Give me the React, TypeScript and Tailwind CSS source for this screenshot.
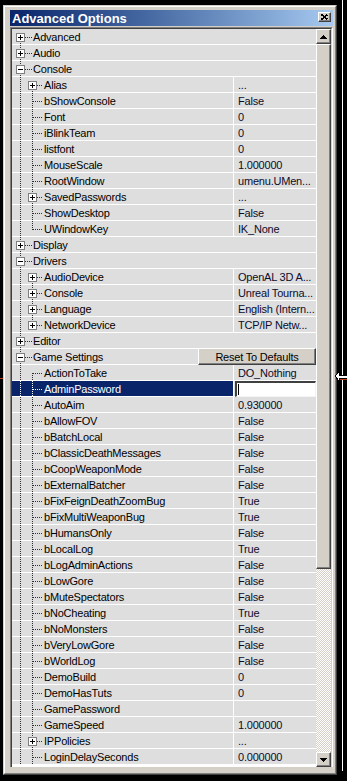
import React from "react";

type Row = {
  label: string;
  value?: string;
  level: 0 | 1;
  box?: "+" | "-";
  top?: boolean;
  first?: boolean;
  last?: boolean;
  button?: boolean;
  selected?: boolean;
};

const rows: Row[] = [
  { label: "Advanced", level: 0, box: "+", top: true },
  { label: "Audio", level: 0, box: "+" },
  { label: "Console", level: 0, box: "-" },
  { label: "Alias", value: "...", level: 1, box: "+", first: true },
  { label: "bShowConsole", value: "False", level: 1 },
  { label: "Font", value: "0", level: 1 },
  { label: "iBlinkTeam", value: "0", level: 1 },
  { label: "listfont", value: "0", level: 1 },
  { label: "MouseScale", value: "1.000000", level: 1 },
  { label: "RootWindow", value: "umenu.UMen...", level: 1 },
  { label: "SavedPasswords", value: "...", level: 1, box: "+" },
  { label: "ShowDesktop", value: "False", level: 1 },
  { label: "UWindowKey", value: "IK_None", level: 1, last: true },
  { label: "Display", level: 0, box: "+" },
  { label: "Drivers", level: 0, box: "-" },
  { label: "AudioDevice", value: "OpenAL 3D A...", level: 1, box: "+", first: true },
  { label: "Console", value: "Unreal Tourna...", level: 1, box: "+" },
  { label: "Language", value: "English (Intern...", level: 1, box: "+" },
  { label: "NetworkDevice", value: "TCP/IP Netw...", level: 1, box: "+", last: true },
  { label: "Editor", level: 0, box: "+" },
  { label: "Game Settings", level: 0, box: "-", button: true },
  { label: "ActionToTake", value: "DO_Nothing", level: 1, first: true },
  { label: "AdminPassword", value: "", level: 1, selected: true },
  { label: "AutoAim", value: "0.930000", level: 1 },
  { label: "bAllowFOV", value: "False", level: 1 },
  { label: "bBatchLocal", value: "False", level: 1 },
  { label: "bClassicDeathMessages", value: "False", level: 1 },
  { label: "bCoopWeaponMode", value: "False", level: 1 },
  { label: "bExternalBatcher", value: "False", level: 1 },
  { label: "bFixFeignDeathZoomBug", value: "True", level: 1 },
  { label: "bFixMultiWeaponBug", value: "True", level: 1 },
  { label: "bHumansOnly", value: "False", level: 1 },
  { label: "bLocalLog", value: "True", level: 1 },
  { label: "bLogAdminActions", value: "False", level: 1 },
  { label: "bLowGore", value: "False", level: 1 },
  { label: "bMuteSpectators", value: "False", level: 1 },
  { label: "bNoCheating", value: "True", level: 1 },
  { label: "bNoMonsters", value: "False", level: 1 },
  { label: "bVeryLowGore", value: "False", level: 1 },
  { label: "bWorldLog", value: "False", level: 1 },
  { label: "DemoBuild", value: "0", level: 1 },
  { label: "DemoHasTuts", value: "0", level: 1 },
  { label: "GamePassword", value: "", level: 1 },
  { label: "GameSpeed", value: "1.000000", level: 1 },
  { label: "IPPolicies", value: "...", level: 1, box: "+" },
  { label: "LoginDelaySeconds", value: "0.000000", level: 1 },
];

const raised =
  "border border-t-white border-l-white border-r-[#404040] border-b-[#404040] shadow-[inset_-1px_-1px_#808080] bg-[#d4d0c8]";

// expand / collapse box, 9px square
function ExpandBox({ x, sign }: { x: number; sign: "+" | "-" }) {
  return (
    <g>
      <rect x={x + 0.5} y={4.5} width={8} height={8} fill="#ffffff" stroke="#808080" />
      <path d={`M${x + 2} 8.5H${x + 7}`} stroke="#000000" />
      {sign === "+" && <path d={`M${x + 4.5} 6V11`} stroke="#000000" />}
    </g>
  );
}

// dotted tree connectors drawn at the left of each row
function Gutter({ row }: { row: Row }) {
  const c = row.selected ? "#ffffff" : "#303030";
  const w = row.level === 0 ? 21 : 32;
  return (
    <svg width={w} height={15} className="shrink-0" shapeRendering="crispEdges">
      <g stroke={c} strokeDasharray="1 1" fill="none">
        <path d={`M8.5 ${row.top ? 12 : 0}V15`} />
        {row.level === 0 && <path d="M13 8.5H20" />}
        {row.level === 1 && (
          <>
            <path d={`M20.5 ${row.first ? 8 : 0}V${row.last ? 9 : 15}`} />
            <path d={`M${row.box ? 25 : 21} 8.5H31`} />
          </>
        )}
      </g>
      {row.box && <ExpandBox x={row.level === 0 ? 4 : 16} sign={row.box} />}
    </svg>
  );
}

function TreeRow({ row }: { row: Row }) {
  if (row.level === 0) {
    return (
      <div className="flex h-[16px] border-b border-white">
        <div className="flex flex-1 items-center">
          <Gutter row={row} />
          <span className="pt-px">{row.label}</span>
        </div>
        {row.button && (
          <div
            className={`${raised} -mt-px flex h-[17px] w-[118px] items-center justify-center pt-px text-black`}
          >
            Reset To Defaults
          </div>
        )}
      </div>
    );
  }
  return (
    <div className="flex h-[16px] border-b border-white">
      <div
        className={`flex w-[221px] items-center ${row.selected ? "bg-[#0a246a] text-white" : ""}`}
      >
        <Gutter row={row} />
        <span className="pt-px">{row.label}</span>
      </div>
      <div className="w-px bg-white" />
      {row.selected ? (
        <div className="flex-1 pl-px">
          <div className="h-[16px] w-[81px] border-t-2 border-l-2 border-r border-b border-t-[#404040] border-l-[#404040] border-r-[#f4f4f4] border-b-[#f4f4f4] bg-white pl-[1px] pt-[1px]">
            <div className="h-[11px] w-px bg-black" />
          </div>
        </div>
      ) : (
        <div className="flex min-w-0 flex-1 items-center overflow-hidden whitespace-nowrap pl-[4px] pt-px text-[#0c0c2c]">
          {row.value}
        </div>
      )}
    </div>
  );
}

function Arrow({ up }: { up?: boolean }) {
  return (
    <svg width={7} height={4} shapeRendering="crispEdges">
      <polygon points={up ? "3.5,0 7,4 0,4" : "0,0 7,0 3.5,4"} fill="#000000" />
    </svg>
  );
}

export default function App() {
  return (
    <div className="relative h-[781px] w-[347px] overflow-hidden bg-black font-['Liberation_Sans',Arial,sans-serif] text-[11px] leading-[15px] tracking-[-0.2px] text-black">
      {/* desktop bits behind the window */}
      <div className="absolute left-[342px] top-0 h-[771px] w-px bg-white" />
      <div className="absolute left-0 top-[378px] h-px w-[3px] bg-[#c0401c]" />
      <div className="absolute left-[338px] top-[379px] h-px w-[9px] bg-[#c0401c]" />

      {/* window */}
      <div className="ml-[3px] mt-[5px] h-[770px] w-[334px] border border-t-[#d4d0c8] border-l-[#d4d0c8] border-r-[#404040] border-b-[#404040] bg-[#d4d0c8]">
        <div className="flex h-full flex-col border border-t-white border-l-white border-r-[#808080] border-b-[#808080] pl-[5px] pr-[2px] pt-[3px]">
          {/* title bar */}
          <div className="flex h-[16px] items-start bg-linear-to-r from-[#0a246a] to-[#a6caf0] pl-[2px]">
            <span className="text-[13px] font-bold leading-[17px] tracking-normal text-white">Advanced Options</span>
            <div className={`${raised} ml-auto mr-[2px] mt-[2px] flex h-[10px] w-[13px] items-center justify-center`}>
              <svg width={7} height={6} shapeRendering="crispEdges">
                <path d="M0.5 0.5L6.5 5.5M6.5 0.5L0.5 5.5" stroke="#000000" strokeWidth={1.6} />
              </svg>
            </div>
          </div>

          {/* property tree */}
          <div className="mt-px h-[740px] border-t border-l border-r border-t-[#808080] border-l-[#808080] border-r-white">
            <div className="flex h-full border-t border-l border-r border-t-[#404040] border-l-[#404040] border-r-[#d4d0c8]">
              <div className="w-[304px] border-b-2 border-white bg-[#dedede]">
                {rows.map((r, i) => (
                  <TreeRow key={i} row={r} />
                ))}
              </div>
              <div className="flex w-[15px] flex-col bg-[image:repeating-conic-gradient(#ffffff_0%_25%,#d4d0c8_0%_50%)] bg-[length:2px_2px]">
                <div className={`${raised} flex h-[15px] items-center justify-center`}>
                  <Arrow up />
                </div>
                <div className={`${raised} h-[525px]`} />
                <div className="flex-1" />
                <div className={`${raised} flex h-[15px] items-center justify-center`}>
                  <Arrow />
                </div>
              </div>
            </div>
          </div>
        </div>
      </div>

      {/* mouse cursor (horizontal resize) */}
      <svg className="absolute left-[334px] top-[371px]" width={13} height={11} shapeRendering="crispEdges">
        <polygon points="1,5 5,1 5,4 13,4 13,7 5,7 5,10" fill="#ffffff" stroke="#000000" />
      </svg>
    </div>
  );
}
